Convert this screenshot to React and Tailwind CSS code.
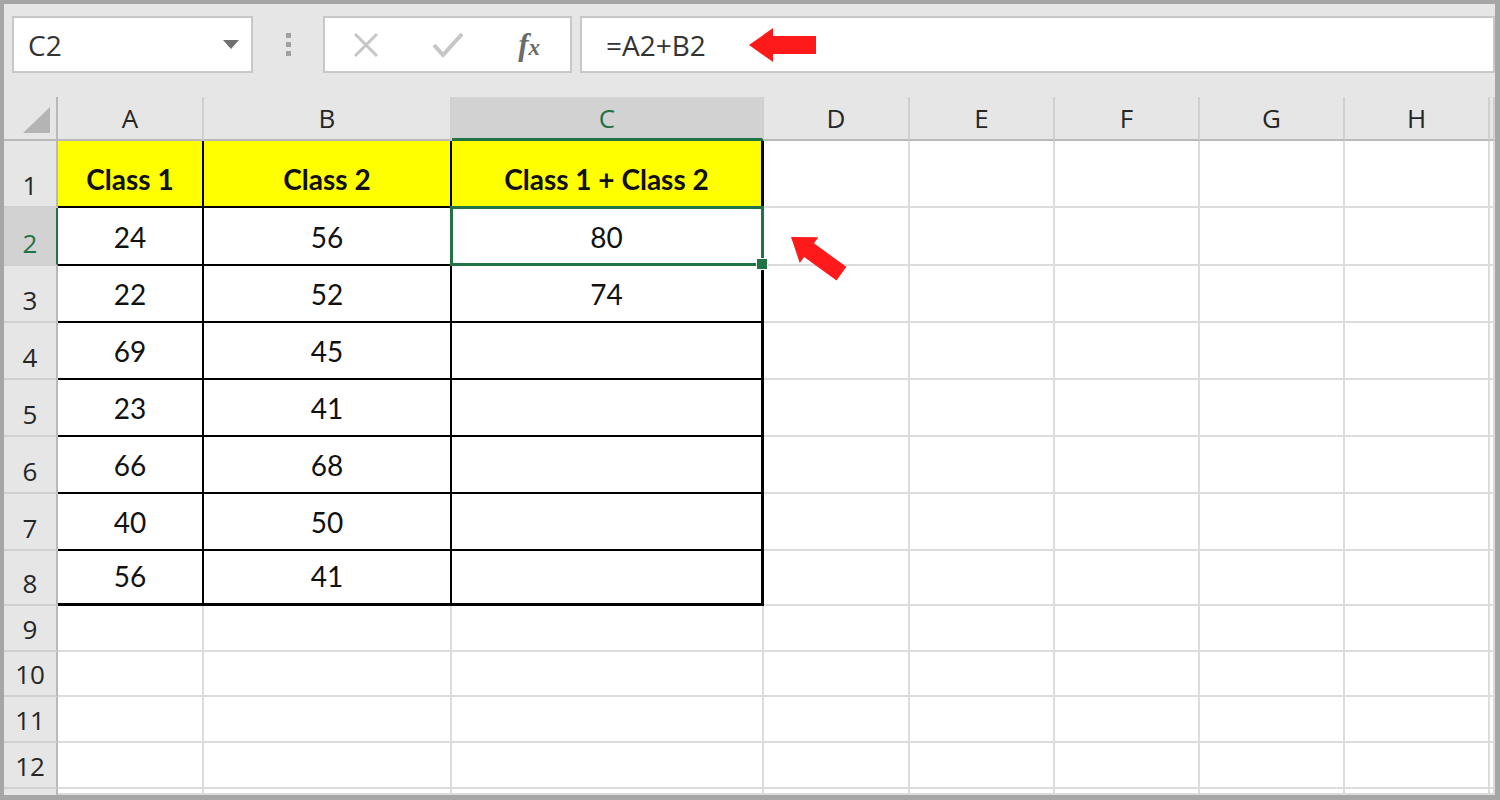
import React from "react";

const LETTERS = ["A", "B", "C", "D", "E", "F", "G", "H", ""];
const DATA = {
  1: ["Class 1", "Class 2", "Class 1 + Class 2"],
  2: ["24", "56", "80"],
  3: ["22", "52", "74"],
  4: ["69", "45", ""],
  5: ["23", "41", ""],
  6: ["66", "68", ""],
  7: ["40", "50", ""],
  8: ["56", "41", ""],
};
const ROWS = [1, 2, 3, 4, 5, 6, 7, 8, 9, 10, 11, 12, 13];

function Arrow({ className, rotate }) {
  return (
    <svg className={className} width="90" height="72" viewBox="0 0 90 72">
      <polygon
        transform={rotate ? "translate(7 9) rotate(36) scale(0.93)" : "translate(0 17)"}
        points="0,0 24,-17 24,-9 67,-9 67,9 24,9 24,17"
        fill="#fe1a1a"
      />
    </svg>
  );
}

function headerClass(c) {
  if (c === 2)
    return "flex items-center justify-center bg-[#d2d2d2] border-r-2 border-b-[3px] border-r-[#d0d0d0] border-b-[#217346] text-[#217346]";
  return "flex items-center justify-center bg-[#e6e6e6] border-r-2 border-b-2 border-r-[#d0d0d0] border-b-[#b9b9b9] text-[#262626]";
}

function rowHeaderClass(r) {
  if (r === 2)
    return "flex items-end justify-center pb-[8px] bg-[#d2d2d2] border-r-2 border-b-2 border-r-[#217346] border-b-[#d0d0d0] text-[#217346] overflow-hidden";
  return "flex items-end justify-center pb-[8px] bg-[#e6e6e6] border-r-2 border-b-2 border-r-[#b9b9b9] border-b-[#d0d0d0] text-[#262626] overflow-hidden";
}

function cellClass(r, c) {
  const inTable = r <= 8 && c <= 2;
  if (!inTable) return "relative bg-white border-r-2 border-b-2 border-[#dcdcdc]";
  let cls = "relative flex items-end justify-center pb-[13px] border-black text-[#111]";
  cls += c === 2 ? " border-r-[3px]" : " border-r-2";
  cls += r === 8 ? " border-b-[3px]" : " border-b-2";
  if (r === 1) cls += " bg-[#ffff00] font-bold";
  else cls += " bg-white";
  return cls;
}

export default function App() {
  return (
    <div className="w-[1500px] h-[800px] overflow-hidden border-l-4 border-t-4 border-r-[5px] border-b-[5px] border-[#a6a6a6] bg-[#e6e6e6] flex flex-col font-['Open_Sans',sans-serif]">
      {/* toolbar */}
      <div className="h-[93px] shrink-0 flex items-start pt-[12px] pl-[8px]">
        <div className="w-[241px] h-[57px] bg-white border-2 border-[#c8c8c8] flex items-center justify-between pl-[14px] pr-[12px]">
          <span className="text-[28px] text-[#333] leading-none">C2</span>
          <svg width="16" height="9" viewBox="0 0 16 9">
            <polygon points="0,0 16,0 8,9" fill="#707070" />
          </svg>
        </div>
        <div className="w-[70px] h-[57px] flex flex-col items-center justify-center gap-[4px]">
          <div className="w-[5px] h-[5px] bg-[#a0a0a0]" />
          <div className="w-[5px] h-[5px] bg-[#a0a0a0]" />
          <div className="w-[5px] h-[5px] bg-[#a0a0a0]" />
        </div>
        <div className="w-[249px] h-[57px] bg-white border-2 border-[#c8c8c8] flex items-center">
          <div className="w-[82px] flex justify-center">
            <svg width="26" height="26" viewBox="0 0 26 26">
              <path d="M2 2 L24 24 M24 2 L2 24" stroke="#c6c6c6" strokeWidth="3" fill="none" />
            </svg>
          </div>
          <div className="w-[82px] flex justify-center">
            <svg width="32" height="26" viewBox="0 0 32 26">
              <path d="M2 13 L11 23 L30 2" stroke="#c6c6c6" strokeWidth="4" fill="none" />
            </svg>
          </div>
          <div className="w-[82px] flex justify-center">
            <span className="font-['Liberation_Serif',serif] italic font-bold text-[#6b6b6b] text-[31px] leading-none">
              f<span className="text-[23px]">x</span>
            </span>
          </div>
        </div>
        <div className="relative ml-[8px] flex-1 h-[57px] bg-white border-2 border-[#c8c8c8] flex items-center pl-[24px]">
          <span className="text-[28px] text-[#333] leading-none">=A2+B2</span>
          <Arrow className="absolute left-[167px] top-[10px]" />
        </div>
      </div>

      {/* grid */}
      <div className="grid grid-cols-[54px_146px_248px_312px_146px_145px_145px_145px_145px_5px] grid-rows-[44px_67px_58px_57px_57px_57px_57px_57px_55px_46px_45px_46px_46px_6px] bg-white">
        <div className="flex items-end justify-end pr-[6px] pb-[6px] bg-[#e6e6e6] border-r-2 border-b-2 border-[#b9b9b9]">
          <svg width="27" height="26" viewBox="0 0 27 26">
            <polygon points="27,0 27,26 0,26" fill="#b4b4b4" />
          </svg>
        </div>
        {LETTERS.map((l, c) => (
          <div key={"h" + c} className={headerClass(c) + " text-[26px] leading-none"}>
            {l}
          </div>
        ))}
        {ROWS.map((r) => (
          <React.Fragment key={"r" + r}>
            <div className={rowHeaderClass(r) + " text-[26px] leading-none"}>{r <= 12 ? r : ""}</div>
            {LETTERS.map((_, c) => {
              const text = DATA[r] && c <= 2 ? DATA[r][c] : "";
              return (
                <div key={r + "-" + c} className={cellClass(r, c) + " font-['Lato',sans-serif] text-[28px] leading-none"}>
                  {text}
                  {r === 2 && c === 2 && (
                    <div className="absolute z-10 -left-[2px] -top-[2px] -right-[3px] -bottom-[2px] border-[3px] border-[#217346]">
                      <div className="absolute -right-[7px] -bottom-[7px] w-[12px] h-[12px] bg-[#217346] border border-white" />
                    </div>
                  )}
                  {r === 2 && c === 3 && (
                    <Arrow className="absolute z-10 left-[20px] top-[20px]" rotate />
                  )}
                </div>
              );
            })}
          </React.Fragment>
        ))}
      </div>
    </div>
  );
}
